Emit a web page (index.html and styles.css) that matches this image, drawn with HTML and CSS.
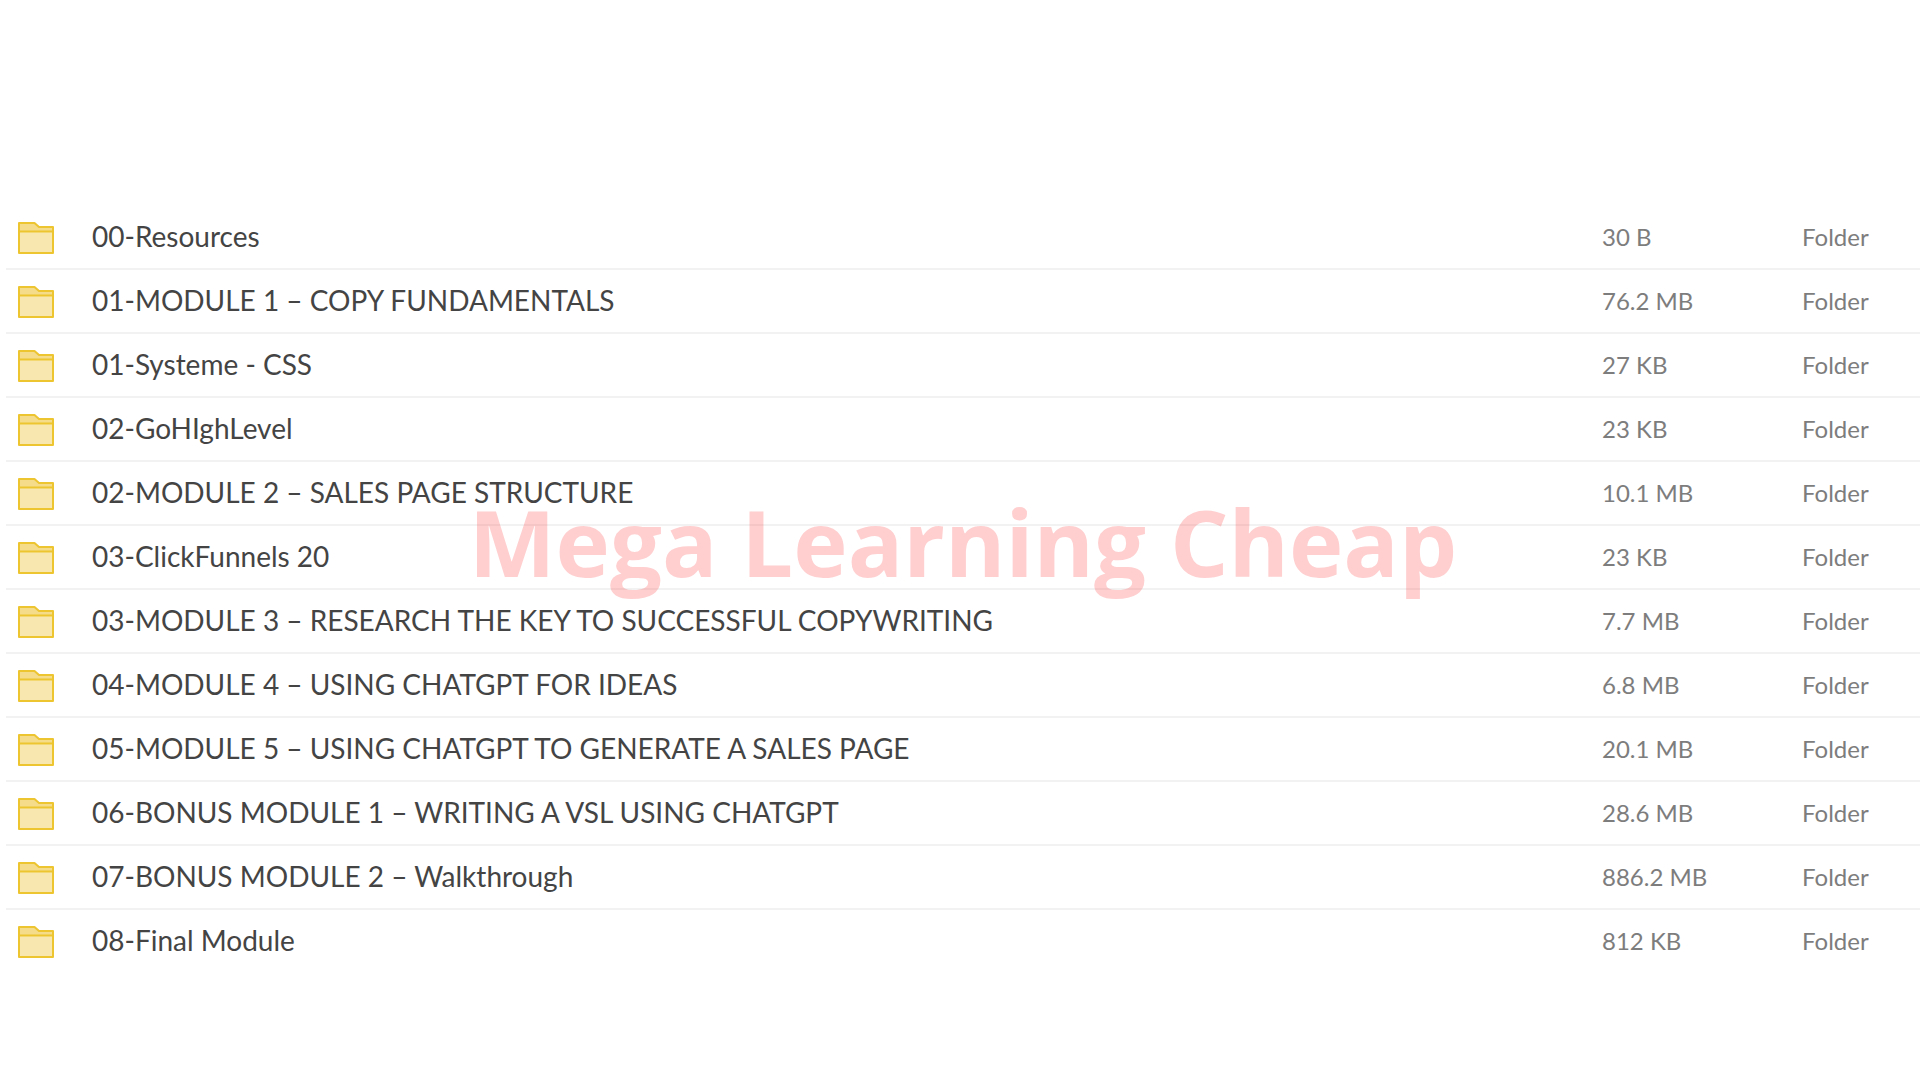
FILE: index.html
```html
<!DOCTYPE html>
<html lang="en">
<head>
<meta charset="utf-8">
<meta name="viewport" content="width=device-width, initial-scale=1">
<title>Mega Learning Cheap</title>
<link rel="stylesheet" href="styles.css">
</head>
<body>
<svg class="sprite" aria-hidden="true">
  <symbol id="folder" viewBox="0 0 38 34">
    <path d="M2 10V2H17.500L22 6H36V10Z" fill="#f5dc8b"/>
    <path d="M2 10H36V32H2Z" fill="#f8e8b0"/>
    <path d="M2 2H17.500L22 6H36V32H2ZM2 10.500H36" fill="none" stroke="#edc531" stroke-width="2" stroke-linejoin="round"/>
  </symbol>
</svg>
<main class="listing">
  <table class="files">
    <tbody>
      <tr><td class="icon"><svg class="folder"><use href="#folder"/></svg></td><td class="name">00-Resources</td><td class="size">30 B</td><td class="type">Folder</td></tr>
      <tr><td class="icon"><svg class="folder"><use href="#folder"/></svg></td><td class="name">01-MODULE 1 – COPY FUNDAMENTALS</td><td class="size">76.2 MB</td><td class="type">Folder</td></tr>
      <tr><td class="icon"><svg class="folder"><use href="#folder"/></svg></td><td class="name">01-Systeme - CSS</td><td class="size">27 KB</td><td class="type">Folder</td></tr>
      <tr><td class="icon"><svg class="folder"><use href="#folder"/></svg></td><td class="name">02-GoHIghLevel</td><td class="size">23 KB</td><td class="type">Folder</td></tr>
      <tr><td class="icon"><svg class="folder"><use href="#folder"/></svg></td><td class="name">02-MODULE 2 – SALES PAGE STRUCTURE</td><td class="size">10.1 MB</td><td class="type">Folder</td></tr>
      <tr><td class="icon"><svg class="folder"><use href="#folder"/></svg></td><td class="name">03-ClickFunnels 20</td><td class="size">23 KB</td><td class="type">Folder</td></tr>
      <tr><td class="icon"><svg class="folder"><use href="#folder"/></svg></td><td class="name">03-MODULE 3 – RESEARCH THE KEY TO SUCCESSFUL COPYWRITING</td><td class="size">7.7 MB</td><td class="type">Folder</td></tr>
      <tr><td class="icon"><svg class="folder"><use href="#folder"/></svg></td><td class="name">04-MODULE 4 – USING CHATGPT FOR IDEAS</td><td class="size">6.8 MB</td><td class="type">Folder</td></tr>
      <tr><td class="icon"><svg class="folder"><use href="#folder"/></svg></td><td class="name">05-MODULE 5 – USING CHATGPT TO GENERATE A SALES PAGE</td><td class="size">20.1 MB</td><td class="type">Folder</td></tr>
      <tr><td class="icon"><svg class="folder"><use href="#folder"/></svg></td><td class="name">06-BONUS MODULE 1 – WRITING A VSL USING CHATGPT</td><td class="size">28.6 MB</td><td class="type">Folder</td></tr>
      <tr><td class="icon"><svg class="folder"><use href="#folder"/></svg></td><td class="name">07-BONUS MODULE 2 – Walkthrough</td><td class="size">886.2 MB</td><td class="type">Folder</td></tr>
      <tr><td class="icon"><svg class="folder"><use href="#folder"/></svg></td><td class="name">08-Final Module</td><td class="size">812 KB</td><td class="type">Folder</td></tr>
    </tbody>
  </table>
  <div class="watermark">Mega Learning Cheap</div>
</main>
</body>
</html>
```
FILE: styles.css
```css
body {
  margin: 0;
  background: #fff;
  color: #444;
  font-family: Lato, "Liberation Sans", sans-serif;
}

.sprite {
  display: none;
}

.listing {
  position: relative;
  margin: 206px 0 0 6px;
}

.files {
  width: 100%;
  border-collapse: separate;
  border-spacing: 0;
  table-layout: fixed;
}

.files td {
  box-sizing: border-box;
  height: 64px;
  padding: 0;
  border-bottom: 2px solid #f2f2f2;
  vertical-align: middle;
  white-space: nowrap;
}

.files tr:last-child td {
  border-bottom-color: transparent;
}

.files .icon {
  width: 86px;
  padding: 2px 0 0 11px;
}

.folder {
  display: block;
  width: 38px;
  height: 34px;
}

.files .name {
  padding-bottom: 2px;
  font-size: 28px;
  line-height: 36px;
}

.files .size,
.files .type {
  width: 200px;
  color: #7d7d7d;
  font-size: 24px;
  line-height: 36px;
}

.files .type {
  width: 118px;
}

.watermark {
  position: absolute;
  inset: 0;
  display: flex;
  align-items: center;
  justify-content: center;
  padding-bottom: 96px;
  color: rgba(255, 49, 54, 0.24);
  font-family: "Open Sans", "Noto Sans", sans-serif;
  font-size: 92px;
  font-weight: 700;
  line-height: 128px;
  white-space: nowrap;
  pointer-events: none;
}
```
